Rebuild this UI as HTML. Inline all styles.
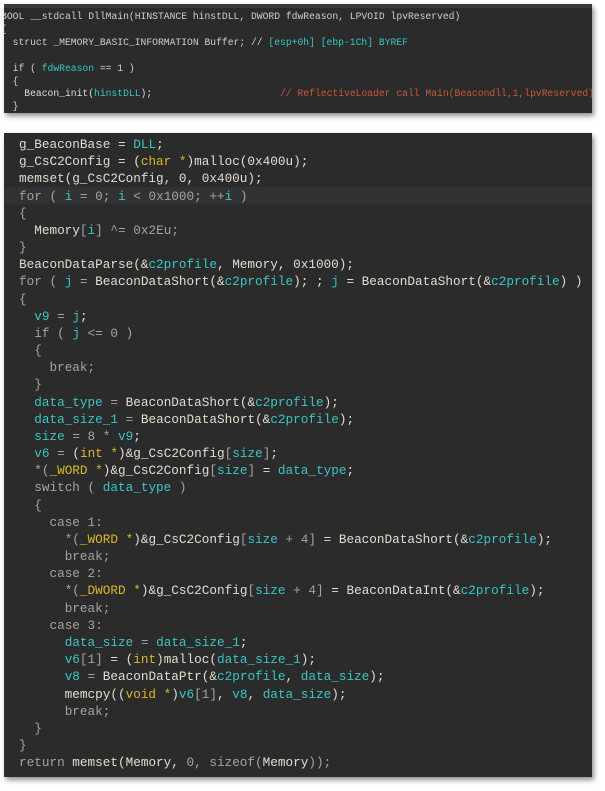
<!DOCTYPE html>
<html><head><style>
html,body{margin:0;padding:0;background:#fff;width:605px;height:791px;overflow:hidden;position:relative}
.p{position:absolute;background:#2b2b2b;box-shadow:2px 3px 5px rgba(0,0,0,.45);overflow:hidden}
pre{margin:0;font-family:"Liberation Mono",monospace;color:#e2dccf;white-space:pre}
#a{left:4px;top:4px;width:588px;height:109px}
#a .bar{position:absolute;left:0;top:0;width:588px;height:4px;background:#3a3a3a}
#a pre{position:absolute;left:-3px;top:7px;font-size:9.7px;line-height:12.9px;color:#cfcfcf}
#b{left:4px;top:133px;width:588px;height:644px}
#b pre{position:absolute;left:15px;top:3px;font-size:12.7px;line-height:17.17px}
.hl{position:absolute;left:0;top:54px;width:588px;height:17px;background:#323232}
.k{color:#a3a3a3}.c{color:#39c6c6}.y{color:#d8b82a}.r{color:#c8583a}.n{color:#b8b8b8}
</style></head><body>
<div class="p" id="a"><div class="bar"></div><pre>BOOL __stdcall DllMain(HINSTANCE hinstDLL, DWORD fdwReason, LPVOID lpvReserved)
<span class="y">{</span>
  struct _MEMORY_BASIC_INFORMATION Buffer; // <span class="c">[esp+0h] [ebp-1Ch] BYREF</span>

  if ( <span class="c">fdwReason</span> == 1 )
  {
    <span style="color:#e2dccf">Beacon_init(</span><span class="c">hinstDLL</span><span style="color:#e2dccf">);</span>                      <span class="r">// ReflectiveLoader call Main(Beacondll,1,lpvReserved)</span>
  }</pre></div>
<div class="p" id="b"><div class="hl"></div><pre>g_BeaconBase = <span class="c">DLL</span>;
g_CsC2Config = (<span class="y">char *</span>)malloc(0x400u);
memset(g_CsC2Config, 0, 0x400u);
<span class="k">for ( <span class="c">i</span> = 0; <span class="c">i</span> &lt; 0x1000; ++<span class="c">i</span> )</span>
<span class="k">{</span>
  Memory<span class="k">[</span><span class="c">i</span><span class="k">]</span> <span class="k">^= 0x2Eu;</span>
<span class="k">}</span>
BeaconDataParse(&amp;<span class="c">c2profile</span>, Memory, 0x1000);
<span class="k">for ( <span class="c">j</span> = </span>BeaconDataShort(&amp;<span class="c">c2profile</span>); ; <span class="c">j</span> = BeaconDataShort(&amp;<span class="c">c2profile</span>) )
<span class="k">{</span>
  <span class="c">v9</span> <span class="k">=</span> <span class="c">j</span>;
  <span class="k">if ( <span class="c">j</span> &lt;= 0 )</span>
  <span class="k">{</span>
    <span class="k">break;</span>
  <span class="k">}</span>
  <span class="c">data_type</span> <span class="k">=</span> BeaconDataShort(&amp;<span class="c">c2profile</span>);
  <span class="c">data_size_1</span> <span class="k">=</span> BeaconDataShort(&amp;<span class="c">c2profile</span>);
  <span class="c">size</span> <span class="k">= 8 *</span> <span class="c">v9</span>;
  <span class="c">v6</span> <span class="k">=</span> (<span class="y">int *</span>)&amp;g_CsC2Config<span class="k">[</span><span class="c">size</span><span class="k">]</span>;
  <span class="k">*(</span><span class="y">_WORD *</span>)&amp;g_CsC2Config<span class="k">[</span><span class="c">size</span><span class="k">]</span> = <span class="c">data_type</span>;
  <span class="k">switch ( <span class="c">data_type</span> )</span>
  <span class="k">{</span>
    <span class="k">case 1:</span>
      <span class="k">*(</span><span class="y">_WORD *</span>)&amp;g_CsC2Config<span class="k">[</span><span class="c">size</span> <span class="k">+ 4]</span> = BeaconDataShort(&amp;<span class="c">c2profile</span>);
      <span class="k">break;</span>
    <span class="k">case 2:</span>
      <span class="k">*(</span><span class="y">_DWORD *</span>)&amp;g_CsC2Config<span class="k">[</span><span class="c">size</span> <span class="k">+ 4]</span> = BeaconDataInt(&amp;<span class="c">c2profile</span>);
      <span class="k">break;</span>
    <span class="k">case 3:</span>
      <span class="c">data_size</span> <span class="k">=</span> <span class="c">data_size_1</span>;
      <span class="c">v6</span><span class="k">[1]</span> = (<span class="y">int</span>)malloc(<span class="c">data_size_1</span>);
      <span class="c">v8</span> <span class="k">=</span> BeaconDataPtr(&amp;<span class="c">c2profile</span>, <span class="c">data_size</span>);
      memcpy((<span class="y">void *</span>)<span class="c">v6</span><span class="k">[1]</span>, <span class="c">v8</span>, <span class="c">data_size</span>);
      <span class="k">break;</span>
  <span class="k">}</span>
<span class="k">}</span>
<span class="k">return</span> memset(Memory, <span class="k">0, sizeof(</span>Memory<span class="k">));</span></pre></div>
</body></html>
